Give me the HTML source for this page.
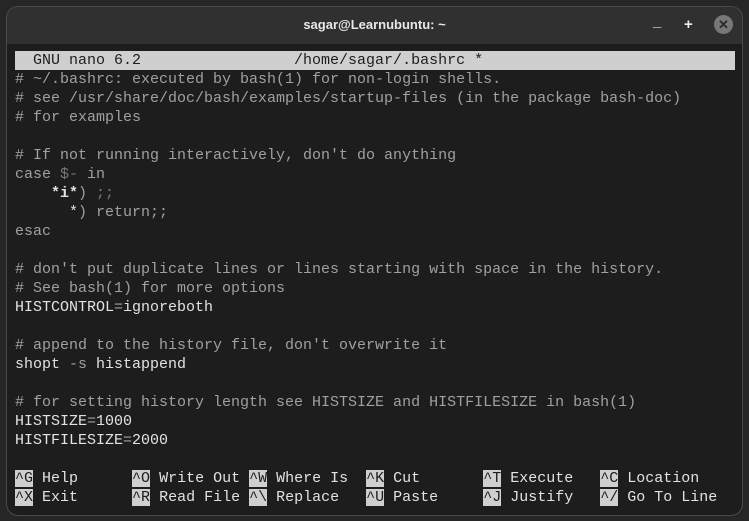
<!DOCTYPE html>
<html><head><meta charset="utf-8"><style>
html,body{margin:0;padding:0;width:749px;height:521px;overflow:hidden;background:#262626;}
.win{position:absolute;left:6px;top:6px;width:737px;height:510px;border-radius:12px;background:#1d1d1d;border:1px solid #4a4a4a;box-sizing:border-box;overflow:hidden;}
.tb{position:absolute;left:0;top:0;right:0;height:37px;background:#303030;border-bottom:1px solid #1a1a1a;}
.title{position:absolute;left:0;right:0;top:10px;text-align:center;color:#e8e8e8;font:bold 13px "Liberation Sans",sans-serif;}
.btn{position:absolute;top:9px;color:#eee;font:bold 15px "Liberation Sans",sans-serif;}
.close{position:absolute;left:707px;top:8px;width:19px;height:19px;border-radius:50%;background:#777;color:#2a2a2a;font:bold 13px "Liberation Sans",sans-serif;text-align:center;line-height:19px;}
pre{position:absolute;left:8px;top:44px;margin:0;font:15px/19px "Liberation Mono",monospace;color:#e2e2e2;}
.h{background:#cfcfcf;color:#1d1d1d;display:inline-block;width:720px;}
.c{color:#a0a0a0;}
.d{color:#777;}
.k{background:#cfcfcf;color:#1d1d1d;}
</style></head><body>
<div class="win">
<div class="tb"><div class="title">sagar@Learnubuntu: ~</div>
<div class="btn" style="left:646px;top:6px">_</div><div class="btn" style="left:677px">+</div><div class="close">✕</div></div>
<pre><span class="h">  GNU nano 6.2                 /home/sagar/.bashrc *</span>
<span class="c"># ~/.bashrc: executed by bash(1) for non-login shells.
# see /usr/share/doc/bash/examples/startup-files (in the package bash-doc)
# for examples

# If not running interactively, don't do anything
case <span class="d">$-</span> in</span>
    <b>*i*</b><span class="c">) <span class="d">;;</span></span>
      *<span class="c">) return;;
esac

# don't put duplicate lines or lines starting with space in the history.
# See bash(1) for more options</span>
HISTCONTROL<span class="c">=</span>ignoreboth

<span class="c"># append to the history file, don't overwrite it</span>
shopt <span class="c">-s</span> histappend

<span class="c"># for setting history length see HISTSIZE and HISTFILESIZE in bash(1)</span>
HISTSIZE<span class="c">=</span>1000
HISTFILESIZE<span class="c">=</span>2000

<span class="k">^G</span> Help      <span class="k">^O</span> Write Out <span class="k">^W</span> Where Is  <span class="k">^K</span> Cut       <span class="k">^T</span> Execute   <span class="k">^C</span> Location
<span class="k">^X</span> Exit      <span class="k">^R</span> Read File <span class="k">^\</span> Replace   <span class="k">^U</span> Paste     <span class="k">^J</span> Justify   <span class="k">^/</span> Go To Line</pre>
</div>
</body></html>
